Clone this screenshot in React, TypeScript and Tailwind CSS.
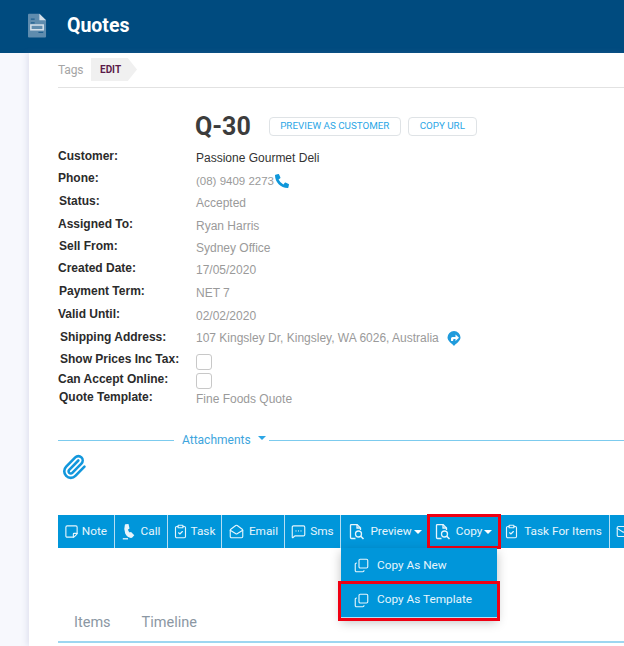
import { ClipboardCheck, Copy, Mail, MailOpen, MessageSquareMore, Paperclip, StickyNote } from "lucide-react";
import { FaPhoneAlt } from "react-icons/fa";
import type { ReactNode } from "react";

function Row({ h, label, lc, vc, children }: { h: string; label: string; lc: string; vc: string; children: ReactNode }) {
  return (
    <div className={`flex ${h}`}>
      <div className="w-[138px] shrink-0 pt-[1px]">
        <div className={`text-[12px] leading-[14px] font-bold text-[#2b2b2b] ${lc}`}>{label}</div>
      </div>
      <div className={`flex items-center text-[12px] leading-[14px] text-[#9a9a9a] ${vc}`}>{children}</div>
    </div>
  );
}

function Btn({ w, icon, label, caret, noBorder, extra }: { w: string; icon: ReactNode; label?: string; caret?: boolean; noBorder?: boolean; extra?: string }) {
  return (
    <div className={`flex h-full shrink-0 items-center justify-center ${w} ${noBorder ? "" : "border-r border-[#b5def3]"} ${extra ?? ""}`}>
      {icon}
      {label && <span className="whitespace-nowrap">{label}</span>}
      {caret && <span className="ml-[2px] h-0 w-0 border-x-[4px] border-t-[4px] border-x-transparent border-t-white" />}
    </div>
  );
}

function DocSearch({ cls }: { cls: string }) {
  return (
    <svg viewBox="0 0 16 16" fill="none" stroke="currentColor" strokeWidth="1.3" className={`h-[16px] w-[16px] shrink-0 ${cls}`}>
      <path d="M6.500 14.500H2.500a1 1 0 0 1-1-1v-12a1 1 0 0 1 1-1H8l3.500 3.500V6" />
      <path d="M8 .5V4h3.500" />
      <circle cx="9.500" cy="10" r="3" />
      <path d="M11.800 12.300l2.700 2.700" strokeWidth="1.600" />
    </svg>
  );
}

function CallIcon({ cls }: { cls: string }) {
  return (
    <svg viewBox="0 0 14 16" fill="none" stroke="currentColor" strokeWidth="1.3" className={`h-[16px] w-[14px] shrink-0 ${cls}`}>
      <path d="M3.500 1L6 .8l.8 3.400-1.500 1c.2 1.800.8 3 2 4l1.600-.5 2.500 2.500-1.700 2c-2.400.3-4.500-1.200-5.800-3.700C2.800 7 2.700 3.500 3.500 1z" fill="currentColor" />
      <path d="M.8 14.800h5.200" />
    </svg>
  );
}

export default function App() {
  const ic = "h-[15px] w-[15px] shrink-0";
  return (
    <div className="relative h-[646px] w-[624px] overflow-hidden bg-[#f7f8fd] font-['Roboto',sans-serif]">
      <header className="flex h-[53px] items-center bg-[#004b7f]">
        <svg width="19" height="25" viewBox="0 0 20 25" className="ml-[28px] -mt-[2px]">
          <path d="M1 0h11l7 7v17a1 1 0 0 1-1 1H1a1 1 0 0 1-1-1V1a1 1 0 0 1 1-1z" fill="#5f8cae" />
          <path d="M12 0l7 7h-7z" fill="#d4e0ea" />
          <path d="M3 5h4v1.500H3zM3 9h4v1.500H3zM11 19h5v1.500h-5z" fill="#1f5f8f" />
          <rect x="3" y="12" width="13" height="5" fill="none" stroke="#d4e0ea" strokeWidth="1.600" />
        </svg>
        <span className="ml-[20px] -mt-[2px] text-[19.5px] font-bold text-white">Quotes</span>
      </header>

      <main className="ml-[29px] h-[593px] bg-white pl-[29px] shadow-[-2px_0_6px_rgba(120,130,180,0.18)]">
        <div className="flex h-[35px] items-start border-b border-[#e2e2e2] pt-[5px]">
          <span className="mt-[5px] w-[33px] text-[12px] leading-[14px] tracking-[-0.2px] text-[#a5a5a5]">Tags</span>
          <span className="flex h-[23px] w-[46px] items-center bg-[#f0f0f0] pl-[9px] text-[10px] font-bold text-[#5a1a4a] [clip-path:polygon(0_0,80%_0,100%_50%,80%_100%,0_100%)]">
            EDIT
          </span>
        </div>

        <div className="flex h-[52px] items-end pl-[137px]">
          <span className="mb-[-3px] text-[25px] leading-[32px] font-bold text-[#3c3c3c]">Q-30</span>
          <span className="mb-[4px] ml-[18px] flex h-[19px] w-[132px] items-center justify-center rounded-[4px] border border-[#dfe3e6] text-[9.8px] text-[#2ba6e6]">PREVIEW AS CUSTOMER</span>
          <span className="mb-[4px] ml-[7px] flex h-[19px] w-[69px] items-center justify-center rounded-[4px] border border-[#dfe3e6] text-[9.8px] text-[#2ba6e6]">COPY URL</span>
        </div>

        <div className="mt-[8px] font-['Liberation_Sans',Arial,sans-serif]">
          <Row h="h-[23px]" label="Customer:" lc="" vc="h-[18px] mt-[1px] text-[#333] text-[11.6px]">Passione Gourmet Deli</Row>
          <Row h="h-[23px]" label="Phone:" lc="mt-[-1px]" vc="h-[18px] mt-[1px]">
            <span className="text-[11.500px]">(08) 9409 2273</span><FaPhoneAlt className="ml-[1px] h-[14px] w-[14px] text-[#0f97da]" />
          </Row>
          <Row h="h-[22px]" label="Status:" lc="ml-[1px] mt-[-1px]" vc="h-[18px]">Accepted</Row>
          <Row h="h-[22px]" label="Assigned To:" lc="" vc="h-[18px] mt-[1px]">Ryan Harris</Row>
          <Row h="h-[23px]" label="Sell From:" lc="ml-[1px]" vc="h-[18px] mt-[1px]">Sydney Office</Row>
          <Row h="h-[22px]" label="Created Date:" lc="mt-[-1px]" vc="h-[18px]">17/05/2020</Row>
          <Row h="h-[23px]" label="Payment Term:" lc="ml-[1px]" vc="h-[18px] mt-[1px]">NET 7</Row>
          <Row h="h-[23px]" label="Valid Until:" lc="" vc="h-[18px] mt-[1px]">02/02/2020</Row>
          <Row h="h-[22px]" label="Shipping Address:" lc="ml-[2px]" vc="h-[18px]">
            107 Kingsley Dr, Kingsley, WA 6026, Australia
            <svg width="14" height="15" viewBox="0 0 14 15" className="ml-[8px]">
              <path d="M7 0a6.500 6.500 0 0 1 6.500 6.500C13.500 10 9 12.500 7 15 5 12.500.5 10 .5 6.500A6.500 6.500 0 0 1 7 0z" fill="#1f9bdc" />
              <path d="M4 10V7.500A1.500 1.500 0 0 1 5.500 6h3V3.500L12 6.800 8.500 10V8H6.500L6 10z" fill="#fff" />
            </svg>
          </Row>
          <Row h="h-[20px]" label="Show Prices Inc Tax:" lc="ml-[2px]" vc="">
            <span className="mt-[1px] h-[16px] w-[16px] rounded-[3px] border border-[#c8c8c8]" />
          </Row>
          <Row h="h-[18px]" label="Can Accept Online:" lc="" vc="">
            <span className="mt-[1px] h-[16px] w-[16px] rounded-[3px] border border-[#c8c8c8]" />
          </Row>
          <Row h="h-[20px]" label="Quote Template:" lc="ml-[1px]" vc="h-[18px] mt-[1px]">Fine Foods Quote</Row>
        </div>

        <div className="mt-[23px] flex h-[16px] items-center text-[12px] text-[#3da5dd]">
          <span className="h-px w-[116px] bg-[#7ccbee]" />
          <span className="ml-[8px]">Attachments</span>
          <span className="mb-[4px] ml-[7px] h-0 w-0 border-x-[4px] border-t-[4px] border-x-transparent border-t-[#2ba6e6]" />
          <span className="ml-[3px] h-px flex-1 bg-[#7ccbee]" />
        </div>

        <Paperclip className="mt-[6px] ml-[3px] h-[26px] w-[26px] text-[#1297dc]" strokeWidth={2.4} />

        <div className="relative mt-[35px] flex h-[33px] w-[700px] bg-[#0096da] text-[11.8px] text-[#e6f5fc]">
          <Btn w="w-[57px]" icon={<StickyNote className={`${ic} mr-[3px] -scale-y-100`} strokeWidth={1.800} />} label="Note" extra="pr-[1px]" />
          <Btn w="w-[53px]" icon={<CallIcon cls="mr-[5px]" />} label="Call" />
          <Btn w="w-[55px]" icon={<ClipboardCheck className={`${ic} mr-[3px]`} strokeWidth={1.800} />} label="Task" extra="-translate-x-[1px]" />
          <Btn w="w-[62px]" icon={<MailOpen className={`${ic} mr-[5px]`} strokeWidth={1.800} />} label="Email" />
          <Btn w="w-[56px]" icon={<MessageSquareMore className={`${ic} mr-[4px]`} strokeWidth={1.800} />} label="Sms" />
          <Btn w="w-[87px]" icon={<DocSearch cls="mr-[5px]" />} label="Preview" caret noBorder extra="pl-[2px]" />
          <Btn w="w-[73px]" icon={<DocSearch cls="mr-[5px]" />} label="Copy" caret noBorder extra="pr-[2px]" />
          <Btn w="w-[109px]" icon={<ClipboardCheck className={`${ic} mr-[5px]`} strokeWidth={1.800} />} label="Task For Items" extra="pr-[4px]" />
          <Btn w="w-[60px]" icon={<Mail className={ic} strokeWidth={1.800} />} noBorder extra="justify-start pl-[6px]" />
          <div className="absolute top-[-1px] left-[369px] h-[35px] w-[74px] border-[3px] border-[#f00012]" />

          <div className="absolute top-[33px] left-[283px] z-10 w-[156px] bg-[#0096da] shadow-[0_4px_10px_rgba(0,0,0,0.25)]">
            <div className="flex h-[35px] items-center gap-[8px] pl-[13px]">
              <Copy className={`${ic} -scale-y-100`} strokeWidth={1.800} />
              <span>Copy As New</span>
            </div>
            <div className="flex h-[35px] items-center gap-[8px] border-b border-[#b5def3] pl-[13px]">
              <Copy className={`${ic} -scale-y-100`} strokeWidth={1.800} />
              <span>Copy As Template</span>
            </div>
          </div>
          <div className="absolute top-[66px] left-[280px] z-20 h-[40px] w-[162px] border-[3px] border-[#f00012]" />
        </div>

        <div className="mt-[57px] flex h-[38px] items-center gap-[31px] border-b-2 border-[#9dd6f0] pl-[16px] text-[14.500px] text-[#8b97a3]">
          <span>Items</span>
          <span>Timeline</span>
        </div>
      </main>
    </div>
  );
}
